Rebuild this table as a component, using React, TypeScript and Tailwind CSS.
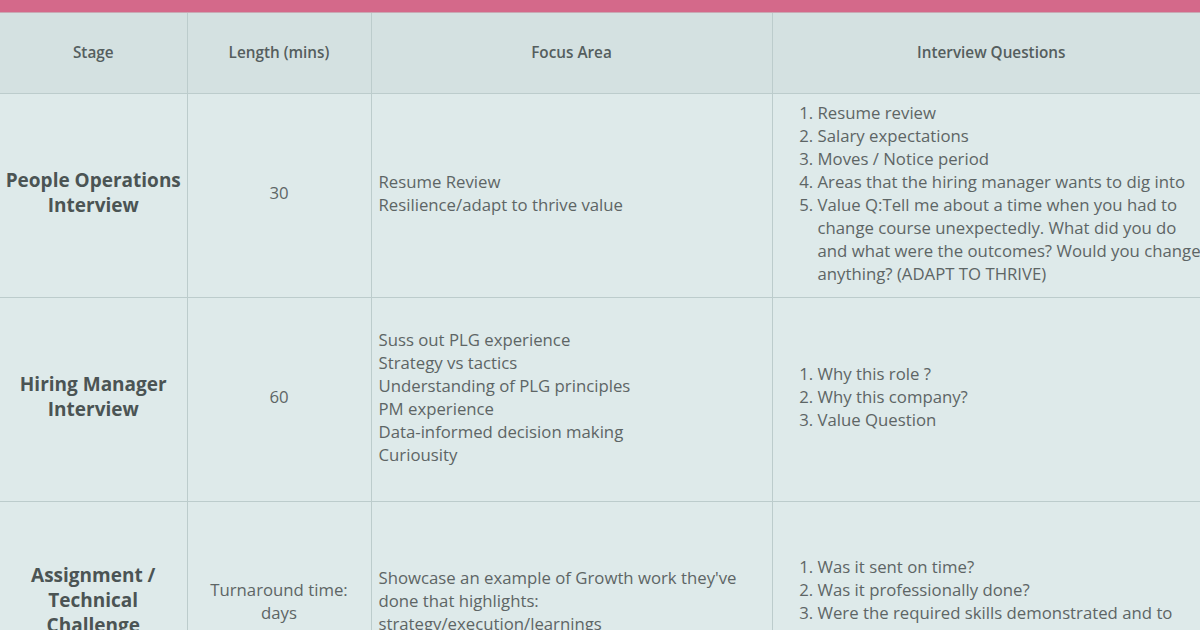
import React from 'react';

type Row = {
    stage: string[];
    length: string[];
    focus: string[];
    questions: string[];
};

const rows: Row[] = [
    {
        stage: ["People Operations", "Interview"],
        length: ["30"],
        focus: ["Resume Review", "Resilience/adapt to thrive value"],
        questions: [
            "Resume review",
            "Salary expectations",
            "Moves / Notice period",
            "Areas that the hiring manager wants to dig into",
            "Value Q:Tell me about a time when you had to change course unexpectedly. What did you do and what were the outcomes? Would you change anything? (ADAPT TO THRIVE)",
        ],
    },
    {
        stage: ["Hiring Manager", "Interview"],
        length: ["60"],
        focus: [
            "Suss out PLG experience",
            "Strategy vs tactics",
            "Understanding of PLG principles",
            "PM experience",
            "Data-informed decision making",
            "Curiousity",
        ],
        questions: ["Why this role ?", "Why this company?", "Value Question"],
    },
    {
        stage: ["Assignment /", "Technical", "Challenge"],
        length: ["Turnaround time:", "days"],
        focus: [
            "Showcase an example of Growth work they've",
            "done that highlights:",
            "strategy/execution/learnings",
        ],
        questions: [
            "Was it sent on time?",
            "Was it professionally done?",
            "Were the required skills demonstrated and to what level?",
        ],
    },
];

function App() {
    return (
        <div className="w-[1200px] h-[630px] overflow-hidden bg-[#deeaea] text-[#5d6565]" style={{ fontFamily: '"Open Sans", "Noto Sans", sans-serif' }}>
            <div className="h-[13px] bg-[#d4698a] border-b border-[#c9a9b4]" />
            <table className="w-[1210px] table-fixed border-collapse">
                <colgroup>
                    <col className="w-[187px]" />
                    <col className="w-[184px]" />
                    <col className="w-[401px]" />
                    <col className="w-[438px]" />
                </colgroup>
                <thead>
                    <tr className="h-[80px] bg-[#d4e1e1] text-[15.3px] text-[#555e5e]">
                        <th className="border-r border-b border-[#bccccc] font-semibold">Stage</th>
                        <th className="border-r border-b border-[#bccccc] font-semibold">Length (mins)</th>
                        <th className="border-r border-b border-[#bccccc] font-semibold">Focus Area</th>
                        <th className="border-b border-[#bccccc] font-semibold">Interview Questions</th>
                    </tr>
                </thead>
                <tbody>
                    {rows.map((row, i) => (
                        <tr key={i} className="h-[204px] text-[16.75px] leading-[23px]">
                            <td className="border-r border-b border-[#bccccc] text-center align-middle pb-[5px] font-bold text-[19px] leading-[25px] text-[#4b5454]">
                                {row.stage.map((s, j) => <div key={j} className="whitespace-nowrap">{s}</div>)}
                            </td>
                            <td className="border-r border-b border-[#bccccc] text-center align-middle pb-[5px]">
                                {row.length.map((s, j) => <div key={j}>{s}</div>)}
                            </td>
                            <td className="border-r border-b border-[#bccccc] align-middle pb-[5px] pl-[7px] pr-[10px]">
                                {row.focus.map((s, j) => <div key={j} className="whitespace-nowrap">{s}</div>)}
                            </td>
                            <td className="border-b border-[#bccccc] align-middle pb-[5px] pl-[26px] pr-[3px]">
                                <ol className="list-decimal pl-[19px]">
                                    {row.questions.map((q, j) => <li key={j}>{q}</li>)}
                                </ol>
                            </td>
                        </tr>
                    ))}
                </tbody>
            </table>
        </div>
    );
}
export default App;
